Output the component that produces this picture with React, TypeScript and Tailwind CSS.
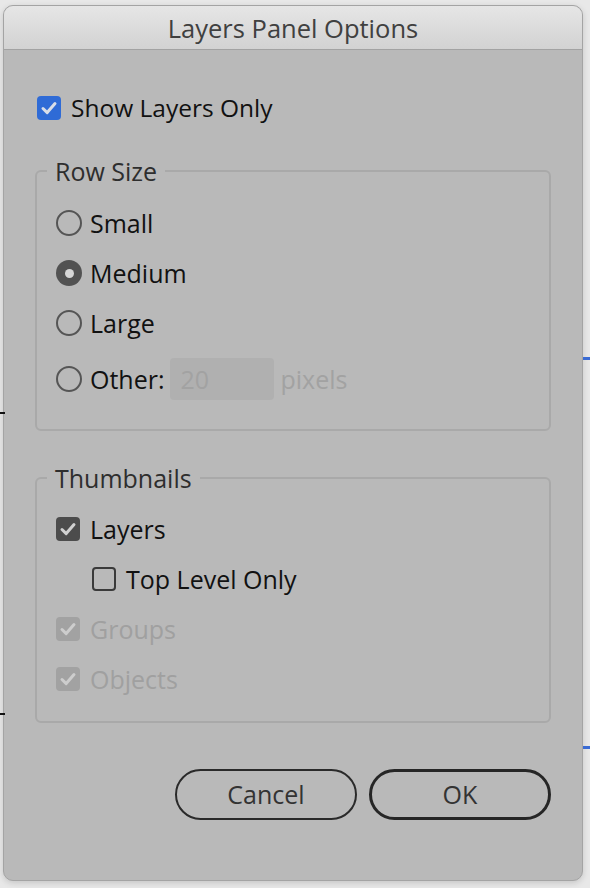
import React from "react";

const font = { fontFamily: '"Open Sans", "Noto Sans", sans-serif' };

function Check({ color }: { color: string }) {
  return (
    <svg viewBox="0 0 24 24" className="w-[24px] h-[24px]">
      <path d="M6 12.5 L10.2 16.6 L18 7.6" fill="none" stroke={color} strokeWidth="3" strokeLinecap="round" strokeLinejoin="round" />
    </svg>
  );
}

function CheckBox({ variant }: { variant: "blue" | "dark" | "empty" | "disabled" }) {
  if (variant === "empty") {
    return <span className="block w-[24px] h-[24px] rounded-[4px] border-2 border-[#3a3a3a] shrink-0" />;
  }
  const bg = variant === "blue" ? "bg-[#2f6bd6]" : variant === "dark" ? "bg-[#4c4c4c]" : "bg-[#a2a2a2]";
  const c = variant === "blue" ? "#d9dee8" : variant === "dark" ? "#d0d0d0" : "#cdcdcd";
  return (
    <span className={`flex w-[24px] h-[24px] rounded-[4px] shrink-0 items-center justify-center ${bg}`}>
      <Check color={c} />
    </span>
  );
}

function Radio({ checked }: { checked?: boolean }) {
  if (checked) {
    return (
      <span className="flex w-[26px] h-[26px] rounded-full bg-[#525252] items-center justify-center shrink-0">
        <span className="block w-[9px] h-[9px] rounded-full bg-[#d6d6d6]" />
      </span>
    );
  }
  return <span className="block w-[26px] h-[26px] rounded-full border-2 border-[#555555] shrink-0" />;
}

function RadioRow({ label, checked }: { label: string; checked?: boolean }) {
  return (
    <div className="flex items-center h-[50px] gap-[8px]">
      <Radio checked={checked} />
      <span className="text-[25px] text-[#111111] leading-none">{label}</span>
    </div>
  );
}

function CheckRow({ label, variant, indent }: { label: string; variant: "dark" | "empty" | "disabled"; indent?: boolean }) {
  const disabled = variant === "disabled";
  return (
    <div className={`flex items-center h-[50px] gap-[10px] ${indent ? "pl-[36px]" : ""}`}>
      <CheckBox variant={variant} />
      <span className={`text-[25px] leading-none ${disabled ? "text-[#a0a0a0]" : "text-[#111111]"}`}>{label}</span>
    </div>
  );
}

export default function App() {
  return (
    <div className="relative w-[590px] h-[888px] bg-[#e8e8e8] overflow-hidden" style={font}>
      {/* background app marks */}
      <div className="absolute left-0 top-[412px] w-[5px] h-[2px] bg-[#111111]" />
      <div className="absolute left-0 top-[713px] w-[5px] h-[2px] bg-[#111111]" />
      <div className="absolute right-0 top-[357px] w-[7px] h-[3px] bg-[#3a6bd4]" />
      <div className="absolute right-0 top-[746px] w-[7px] h-[3px] bg-[#3a6bd4]" />

      <div className="pl-[3px] pt-[5px]">
        <div className="w-[580px] h-[876px] rounded-[10px] border border-[#a4a4a4] bg-[#b9b9b9] overflow-hidden shadow-[0_2px_6px_rgba(0,0,0,0.15)] flex flex-col">
          <div className="h-[44px] shrink-0 flex items-center justify-center pt-[3px] bg-gradient-to-b from-[#e6e6e6] to-[#d2d2d2] border-b border-[#a2a2a2]">
            <span className="text-[25.5px] text-[#404040] leading-none">Layers Panel Options</span>
          </div>

          <div className="flex flex-col px-[31px]">
            <div className="flex items-center gap-[10px] pl-[2px] mt-[46px] h-[24px]">
              <CheckBox variant="blue" />
              <span className="text-[24.5px] text-[#111111] leading-none">Show Layers Only</span>
            </div>

            <fieldset className="mt-[36px] border-2 border-[#a9a9a9] rounded-[6px] pl-[19px] pr-[19px] pt-[12px] pb-[25px]">
              <legend className="-ml-[9px] px-[8px] text-[25px] text-[#2e2e2e] leading-[30px]">Row Size</legend>
              <RadioRow label="Small" />
              <RadioRow label="Medium" checked />
              <RadioRow label="Large" />
              <div className="flex items-center h-[50px] mt-[6px] gap-[8px]">
                <Radio />
                <span className="text-[25px] text-[#111111] leading-none">Other:</span>
                <div className="w-[104px] h-[42px] rounded-[4px] bg-[#b0b0b0] flex items-center pl-[11px] -ml-[3px]">
                  <span className="text-[25px] text-[#a2a2a2] leading-none">20</span>
                </div>
                <span className="text-[25px] text-[#a2a2a2] leading-none -ml-[1px]">pixels</span>
              </div>
            </fieldset>

            <fieldset className="mt-[32px] border-2 border-[#a9a9a9] rounded-[6px] pl-[19px] pr-[19px] pt-[11px] pb-[17px]">
              <legend className="-ml-[9px] px-[8px] text-[25px] text-[#2e2e2e] leading-[30px]">Thumbnails</legend>
              <CheckRow label="Layers" variant="dark" />
              <CheckRow label="Top Level Only" variant="empty" indent />
              <CheckRow label="Groups" variant="disabled" />
              <CheckRow label="Objects" variant="disabled" />
            </fieldset>

            <div className="flex justify-end gap-[12px] mt-[46px]">
              <button className="w-[182px] h-[51px] rounded-full border-2 border-[#2a2a2a] text-[25px] text-[#333333] leading-none flex items-center justify-center">
                Cancel
              </button>
              <button className="w-[182px] h-[51px] rounded-full border-[3.5px] border-[#262626] text-[25px] text-[#333333] leading-none flex items-center justify-center">
                OK
              </button>
            </div>
          </div>
        </div>
      </div>
    </div>
  );
}
